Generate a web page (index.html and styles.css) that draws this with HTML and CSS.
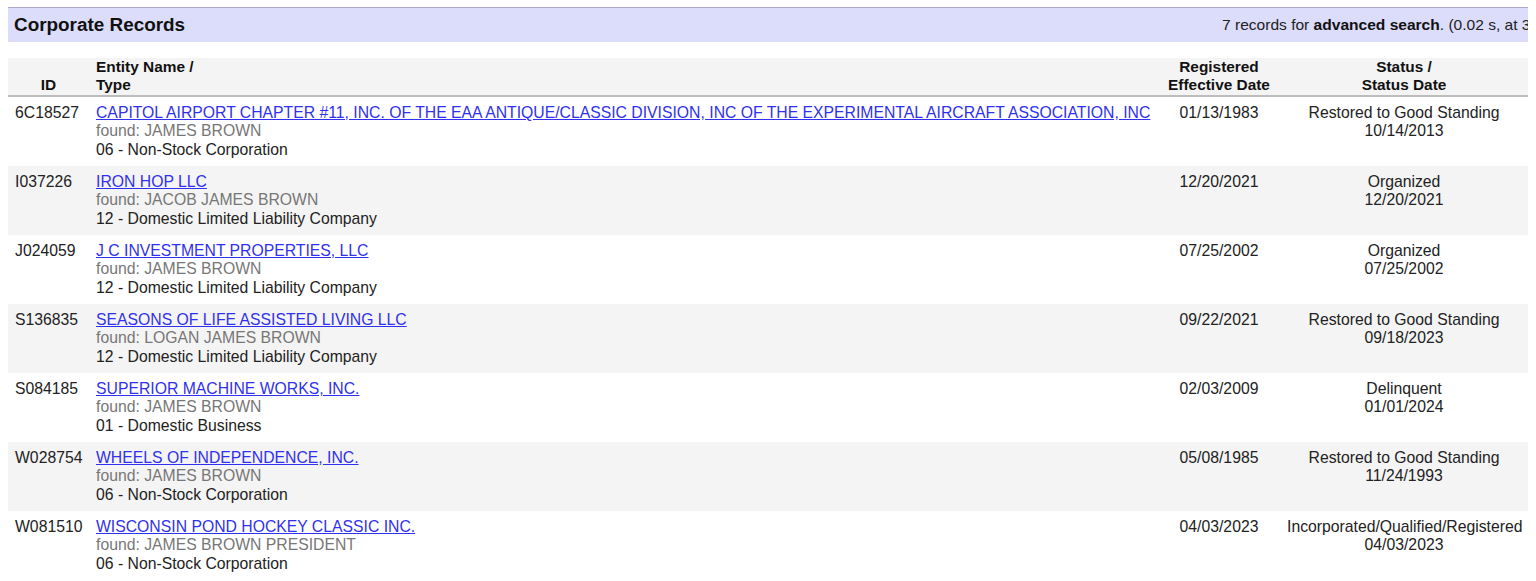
FILE: index.html
```html
<!DOCTYPE html>
<html lang="en">
<head>
<meta charset="utf-8">
<title>Corporate Records</title>
<link rel="stylesheet" href="styles.css">
</head>
<body>
<div class="bar">
  <h1 class="bar-title">Corporate Records</h1>
  <div class="bar-info">7 records for <b>advanced search</b>. (0.02 s, at 3:41 PM)</div>
</div>
<table class="records">
  <colgroup>
    <col class="c-id">
    <col class="c-name">
    <col class="c-reg">
    <col class="c-status">
  </colgroup>
  <thead>
    <tr>
      <th class="center">ID</th>
      <th class="left">Entity Name /<br>Type</th>
      <th class="center">Registered<br>Effective Date</th>
      <th class="center">Status /<br>Status Date</th>
    </tr>
  </thead>
  <tbody>
    <tr>
      <td>6C18527</td>
      <td><a href="#">CAPITOL AIRPORT CHAPTER #11, INC. OF THE EAA ANTIQUE/CLASSIC DIVISION, INC OF THE EXPERIMENTAL AIRCRAFT ASSOCIATION, INC</a><br><span class="found">found: JAMES BROWN</span><br>06 - Non-Stock Corporation</td>
      <td class="center">01/13/1983</td>
      <td class="center">Restored to Good Standing<br>10/14/2013</td>
    </tr>
    <tr class="alt">
      <td>I037226</td>
      <td><a href="#">IRON HOP LLC</a><br><span class="found">found: JACOB JAMES BROWN</span><br>12 - Domestic Limited Liability Company</td>
      <td class="center">12/20/2021</td>
      <td class="center">Organized<br>12/20/2021</td>
    </tr>
    <tr>
      <td>J024059</td>
      <td><a href="#">J C INVESTMENT PROPERTIES, LLC</a><br><span class="found">found: JAMES BROWN</span><br>12 - Domestic Limited Liability Company</td>
      <td class="center">07/25/2002</td>
      <td class="center">Organized<br>07/25/2002</td>
    </tr>
    <tr class="alt">
      <td>S136835</td>
      <td><a href="#">SEASONS OF LIFE ASSISTED LIVING LLC</a><br><span class="found">found: LOGAN JAMES BROWN</span><br>12 - Domestic Limited Liability Company</td>
      <td class="center">09/22/2021</td>
      <td class="center">Restored to Good Standing<br>09/18/2023</td>
    </tr>
    <tr>
      <td>S084185</td>
      <td><a href="#">SUPERIOR MACHINE WORKS, INC.</a><br><span class="found">found: JAMES BROWN</span><br>01 - Domestic Business</td>
      <td class="center">02/03/2009</td>
      <td class="center">Delinquent<br>01/01/2024</td>
    </tr>
    <tr class="alt">
      <td>W028754</td>
      <td><a href="#">WHEELS OF INDEPENDENCE, INC.</a><br><span class="found">found: JAMES BROWN</span><br>06 - Non-Stock Corporation</td>
      <td class="center">05/08/1985</td>
      <td class="center">Restored to Good Standing<br>11/24/1993</td>
    </tr>
    <tr>
      <td>W081510</td>
      <td><a href="#">WISCONSIN POND HOCKEY CLASSIC INC.</a><br><span class="found">found: JAMES BROWN PRESIDENT</span><br>06 - Non-Stock Corporation</td>
      <td class="center">04/03/2023</td>
      <td class="center">Incorporated/Qualified/Registered<br>04/03/2023</td>
    </tr>
  </tbody>
</table>
</body>
</html>
```
FILE: styles.css
```css
html {
  overflow: hidden;
}
body {
  margin: 7px 8px 8px 8px;
  font-family: "Liberation Sans", Arial, sans-serif;
  font-size: 15.75px;
  line-height: 18.34px;
  color: #222;
  background: #fff;
}
.bar {
  display: flex;
  align-items: center;
  height: 34px;
  margin-right: -8px;
  padding-left: 6px;
  background: #dcdcfb;
  border-top: 1px solid #a9a9cf;
}
.bar-title {
  flex: 1;
  margin: 0;
  font-size: 18.9px;
  line-height: 22px;
  font-weight: bold;
  color: #111;
}
.bar-info {
  width: 314px;
  flex-shrink: 0;
  white-space: nowrap;
  overflow: hidden;
  font-size: 15.55px;
  color: #222;
}
.bar-info b {
  color: #111;
}
.records {
  width: 100%;
  margin-top: 16px;
  border-collapse: collapse;
  table-layout: fixed;
}
.c-id { width: 81px; }
.c-reg { width: 122px; }
.c-status { width: 248px; }
.records th {
  background: #f4f4f4;
  font-size: 15.4px;
  line-height: 18.4px;
  font-weight: bold;
  color: #111;
  vertical-align: bottom;
  padding: 0 7px 0 7px;
  border-bottom: 2px solid #bdbdbd;
}
.records td {
  vertical-align: top;
  padding: 7px 7px 7px 7px;
  text-align: left;
}
.records tr.alt td {
  background: #f4f4f4;
}
.records .center {
  text-align: center;
}
.records .left {
  text-align: left;
}
.records a {
  color: #3030f0;
}
.found {
  color: #777;
}
```
